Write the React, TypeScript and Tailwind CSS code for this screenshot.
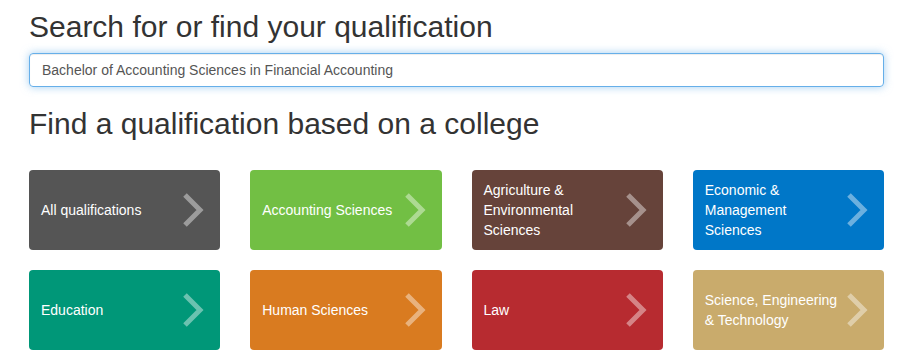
const colleges: { name: string; bg: string }[] = [
  { name: 'All qualifications', bg: 'bg-[#555555]' },
  { name: 'Accounting Sciences', bg: 'bg-[#72bf44]' },
  { name: 'Agriculture & Environmental Sciences', bg: 'bg-[#66433a]' },
  { name: 'Economic & Management Sciences', bg: 'bg-[#0077c8]' },
  { name: 'Education', bg: 'bg-[#009778]' },
  { name: 'Human Sciences', bg: 'bg-[#d97b20]' },
  { name: 'Law', bg: 'bg-[#b72b30]' },
  { name: 'Science, Engineering & Technology', bg: 'bg-[#c9ab6c]' },
];

function Chevron() {
  return (
    <svg
      width="22"
      height="36"
      viewBox="0 0 22 36"
      className="absolute right-[16px] top-1/2 -translate-y-1/2"
    >
      <polyline
        points="3,3 18,18 3,33"
        fill="none"
        stroke="rgba(255,255,255,0.42)"
        strokeWidth="5"
        strokeLinejoin="miter"
      />
    </svg>
  );
}

export default function App() {
  return (
    <div className="min-h-screen bg-white pl-[29px] pt-[10px] font-['Liberation_Sans',Arial,sans-serif] text-[#333]">
      <div className="w-[855px]">
        {/* Search */}
        <h2 className="text-[30px] leading-[33px] font-normal">Search for or find your qualification</h2>
        <input
          type="text"
          defaultValue="Bachelor of Accounting Sciences in Financial Accounting"
          className="mt-[10px] block h-[34px] w-full rounded-[4px] border border-[#66afe9] px-[12px] text-[14px] text-[#555] outline-none shadow-[inset_0_1px_1px_rgba(0,0,0,0.075),0_0_8px_rgba(102,175,233,0.6)]"
        />

        {/* Colleges */}
        <h2 className="mt-[20px] text-[30px] leading-[33px] font-normal">Find a qualification based on a college</h2>
        <div className="mt-[30px] grid grid-cols-4 gap-x-[30px] gap-y-[20px]">
          {colleges.map((c) => (
            <a
              key={c.name}
              href="#"
              className={`relative flex h-[80px] items-center rounded-[4px] pl-[12px] pr-[42px] text-[14px] leading-[20px] text-white ${c.bg}`}
            >
              <span>{c.name}</span>
              <Chevron />
            </a>
          ))}
        </div>
      </div>
    </div>
  );
}
